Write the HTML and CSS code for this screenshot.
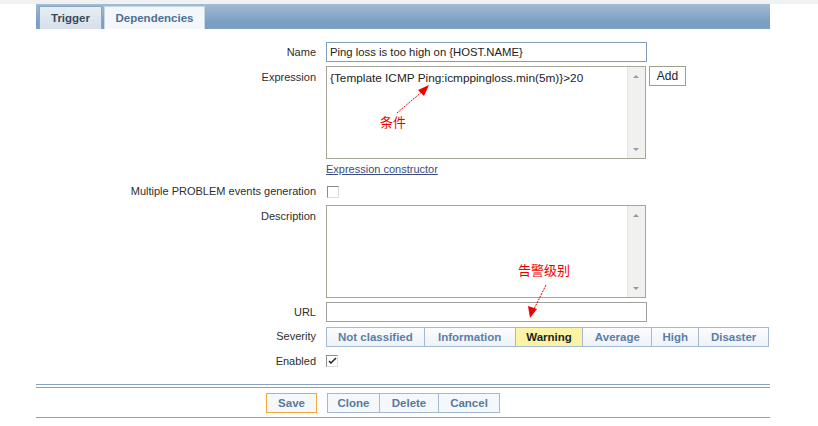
FILE: index.html
```html
<!DOCTYPE html>
<html lang="en">
<head>
    <meta charset="UTF-8">
    <title>Trigger</title>
    <link rel="stylesheet" href="styles.css">
</head>
<body>
    <div class="topline"></div>
    <div class="page">
        <div class="tabs">
            <div class="tab tab-trigger active">Trigger</div>
            <div class="tab tab-deps">Dependencies</div>
        </div>

        <div class="form">
            <div class="label">Name</div>
            <div class="field"><div class="input name-input">Ping loss is too high on {HOST.NAME}</div></div>

            <div class="label label-top">Expression</div>
            <div class="field field-row">
                <div class="textbox">
                    <div class="textbox-text">{Template ICMP Ping:icmppingloss.min(5m)}&gt;20</div>
                    <div class="scrollbar"><span class="arrow-up"></span><span class="arrow-down"></span></div>
                </div>
                <div class="add-button">Add</div>
            </div>

            <div class="label label-short"></div>
            <div class="field field-short"><a class="link" href="#">Expression constructor</a></div>

            <div class="label">Multiple PROBLEM events generation</div>
            <div class="field"><span class="checkbox"></span></div>

            <div class="label label-top">Description</div>
            <div class="field">
                <div class="textbox">
                    <div class="textbox-text"></div>
                    <div class="scrollbar"><span class="arrow-up"></span><span class="arrow-down"></span></div>
                </div>
            </div>

            <div class="label">URL</div>
            <div class="field"><div class="input"></div></div>

            <div class="label">Severity</div>
            <div class="field">
                <div class="severity">
                    <span class="sev sev-not">Not classified</span>
                    <span class="sev sev-info">Information</span>
                    <span class="sev sev-warn selected">Warning</span>
                    <span class="sev sev-avg">Average</span>
                    <span class="sev sev-high">High</span>
                    <span class="sev sev-dis">Disaster</span>
                </div>
            </div>

            <div class="label">Enabled</div>
            <div class="field">
                <span class="checkbox checked">
                    <svg width="9" height="8" viewBox="0 0 9 8"><path d="M1 4 L3 6 L8 1" fill="none" stroke="#222" stroke-width="1.5"/></svg>
                </span>
            </div>
        </div>

        <div class="double-line"></div>

        <div class="actions">
            <span class="btn save">Save</span>
            <div class="btn-group">
                <span class="btn btn-clone">Clone</span>
                <span class="btn btn-delete">Delete</span>
                <span class="btn btn-cancel">Cancel</span>
            </div>
        </div>
        <div class="bottom-line"></div>

        <!-- annotations -->
        <div class="note note-cond">条件</div>
        <div class="note note-sev">告警级别</div>
        <svg class="arrows" width="818" height="426" viewBox="0 0 818 426">
            <line x1="397" y1="113" x2="424" y2="90" stroke="#e00" stroke-width="1" stroke-dasharray="2 1"/>
            <polygon points="429,85 418,90 424,96" fill="#e00"/>
            <line x1="546" y1="285" x2="534" y2="309" stroke="#e00" stroke-width="1" stroke-dasharray="2 1"/>
            <polygon points="530,318 528,306 537,309" fill="#e00"/>
        </svg>
    </div>
</body>
</html>
```

FILE: styles.css
```css
body {
    margin: 0;
    padding: 0;
    font-family: 'Liberation Sans', Arial, sans-serif;
    font-size: 11px;
    color: #2b2b2b;
    background: #fff;
}

.topline {
    height: 4px;
    background: #f0f1f2;
}

.page {
    margin-left: 36px;
    width: 734px;
}

.tabs {
    height: 25px;
    display: flex;
    align-items: flex-end;
    gap: 2px;
    padding-left: 3px;
    background: linear-gradient(#a3bbd3, #7b9fc3 70%);
}

.tab {
    height: 22px;
    line-height: 22px;
    text-align: center;
    font-weight: bold;
    font-size: 11.5px;
    color: #4b6f96;
    background: #f4f7fa;
    border: 1px solid #c9d6e3;
    border-bottom: none;
}

.tab-trigger { width: 61px; }
.tab-deps { width: 99px; }

.tab.active {
    color: #394a5c;
    background: linear-gradient(#e6edf4, #d5e0ea);
    border-color: #8aa6c2;
}

.form {
    display: grid;
    grid-template-columns: 280px 444px;
    column-gap: 10px;
    row-gap: 4px;
    margin-top: 13px;
}

.label {
    text-align: right;
    line-height: 20px;
    height: 20px;
    color: #2e2e2e;
}

.label-top {
    line-height: 22px;
}

.label-short,
.field-short {
    height: 14px;
}

.input {
    width: 316px;
    height: 18px;
    line-height: 18px;
    padding-left: 3px;
    border: 1px solid #a0a09a;
    color: #222;
    font-size: 11.3px;
}

.name-input {
    border-color: #7f9db9;
}

.field-row {
    display: flex;
    gap: 3px;
    align-items: flex-start;
}

.textbox {
    width: 318px;
    height: 91px;
    border: 1px solid #a8a698;
    display: flex;
}

.textbox-text {
    flex: 1;
    padding: 4px 3px;
    line-height: 14px;
    font-size: 11.8px;
    color: #222;
}

.scrollbar {
    width: 17px;
    background: #f1f1ef;
    border-left: 1px solid #e4e4e0;
    position: relative;
}

.arrow-up,
.arrow-down {
    position: absolute;
    left: 5px;
    width: 0;
    height: 0;
    border-left: 3px solid transparent;
    border-right: 3px solid transparent;
}

.arrow-up {
    top: 8px;
    border-bottom: 3px solid #9a9a9a;
}

.arrow-down {
    bottom: 7px;
    border-top: 3px solid #9a9a9a;
}

.add-button {
    width: 35px;
    height: 18px;
    line-height: 18px;
    text-align: center;
    border: 1px solid #a09d88;
    color: #222;
    font-size: 12px;
}

.link {
    display: block;
    color: #3a4c80;
    line-height: 12px;
    margin-top: 0;
}

.checkbox {
    display: inline-block;
    width: 10px;
    height: 10px;
    margin-top: 5px;
    margin-left: 1px;
    border-top: 1px solid #8c8c8c;
    border-left: 1px solid #8c8c8c;
    border-right: 1px solid #dcdcdc;
    border-bottom: 1px solid #dcdcdc;
    vertical-align: top;
    position: relative;
}

.checkbox svg {
    position: absolute;
    left: 1px;
    top: 1px;
}

.checked {
    margin-left: 0;
    margin-top: 4px;
}

.severity {
    display: flex;
    width: 442px;
    margin-top: 1px;
}

.sev {
    height: 18px;
    line-height: 18px;
    text-align: center;
    font-weight: bold;
    font-size: 11.5px;
    color: #5c7ea6;
    background: linear-gradient(#fbfcfd, #eef3f8);
    border: 1px solid #a5b9d0;
    margin-right: -1px;
}

.sev-not { width: 97px; }
.sev-info { width: 90px; }
.sev-warn { width: 67px; }
.sev-avg { width: 68px; }
.sev-high { width: 46px; }
.sev-dis { width: 69px; }

.sev.selected {
    background: #fbf3a5;
    color: #1e1e1e;
}

.double-line {
    margin-top: 13px;
    height: 2px;
    border-top: 1px solid #86a2c0;
    border-bottom: 1px solid #86a2c0;
}

.actions {
    display: flex;
    gap: 10px;
    margin-top: 5px;
    margin-left: 230px;
}

.btn-group {
    display: flex;
}

.btn {
    height: 18px;
    line-height: 18px;
    text-align: center;
    font-weight: bold;
    font-size: 11.5px;
    color: #5878a0;
    background: #f5f8fb;
    border: 1px solid #a5b9d0;
}

.btn-group .btn + .btn {
    border-left: none;
}

.btn.save {
    width: 49px;
    border-color: #f3a73c;
}

.btn-clone { width: 51px; }
.btn-delete { width: 58px; }
.btn-cancel { width: 60px; }

.bottom-line {
    margin-top: 4px;
    border-top: 1px solid #86a2c0;
}

.note {
    position: absolute;
    font-family: 'Noto Sans CJK SC', sans-serif;
    font-size: 13px;
    color: #e00;
    line-height: 16px;
}

.note-cond {
    left: 380px;
    top: 114px;
}

.note-sev {
    left: 518px;
    top: 262px;
}

.arrows {
    position: absolute;
    left: 0;
    top: 0;
    pointer-events: none;
}
```
